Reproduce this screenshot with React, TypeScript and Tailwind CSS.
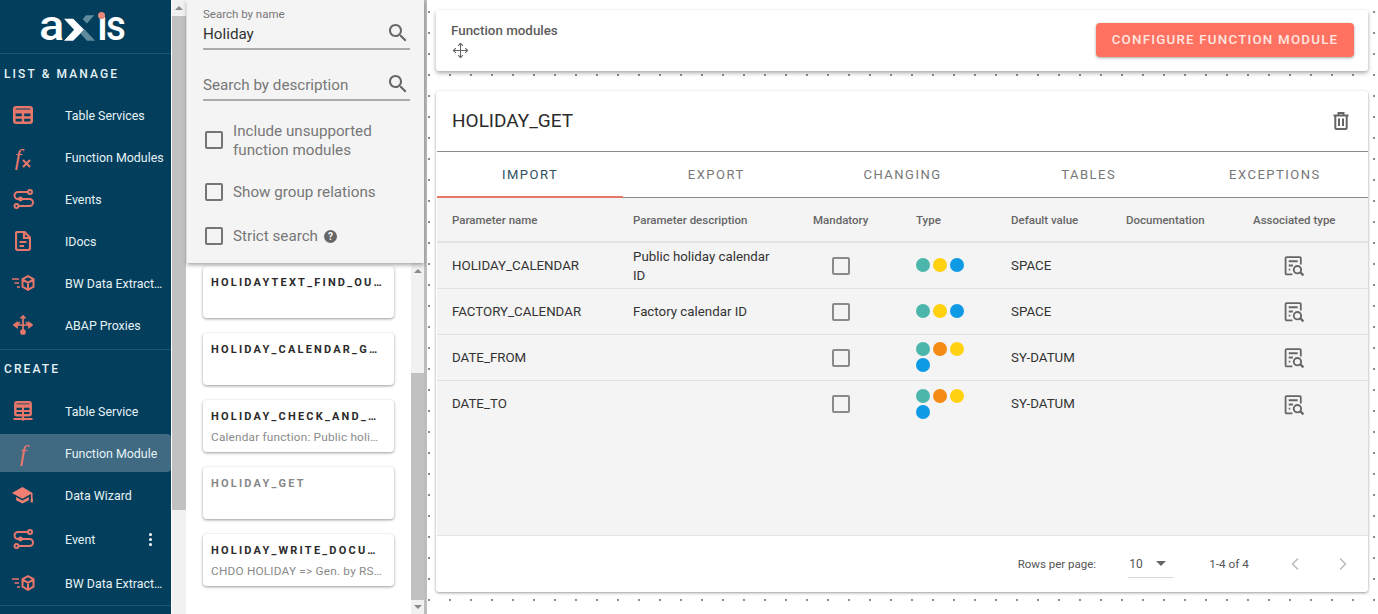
import { ReactNode } from "react";
import { ChevronLeft, ChevronRight, Move } from "lucide-react";

const salmon = "#e8776b";

function SearchIcon({ className }: { className: string }) {
  return (
    <svg width="24" height="24" viewBox="0 0 24 24" fill="#666" className={className}>
      <path d="M15.5 14h-.79l-.28-.27C15.41 12.59 16 11.11 16 9.5 16 5.91 13.09 3 9.5 3S3 5.91 3 9.5 5.91 16 9.5 16c1.61 0 3.09-.59 4.23-1.57l.27.28v.79l5 4.99L20.49 19l-4.99-5zm-6 0C7.01 14 5 11.99 5 9.5S7.01 5 9.5 5 14 7.01 14 9.5 11.99 14 9.5 14z" />
    </svg>
  );
}

function TableIcon() {
  return (
    <svg width="20" height="18" viewBox="0 0 20 18" fill="none">
      <rect x="1.3" y="1.3" width="17.4" height="15.4" rx="2" stroke={salmon} strokeWidth="2.6" />
      <path d="M1 5.500h18" stroke={salmon} strokeWidth="4" />
      <path d="M1 11.500h18M10 6v11" stroke={salmon} strokeWidth="2.4" />
    </svg>
  );
}

function FxIcon() {
  return (
    <span className="flex items-end [font-family:'Liberation_Serif',serif] italic text-[#e8776b] leading-none">
      <span className="text-[24px]">f</span>
      <svg width="9" height="9" viewBox="0 0 9 9" className="mb-[1px] ml-[1px]">
        <path d="M1 1l7 7M8 1L1 8" stroke={salmon} strokeWidth="2" />
      </svg>
    </span>
  );
}

function RouteIcon() {
  return (
    <svg width="21" height="20" viewBox="0 0 21 20" fill="none" stroke={salmon} strokeWidth="2">
      <circle cx="17" cy="3" r="2" />
      <circle cx="3.500" cy="17" r="2" />
      <circle cx="7.500" cy="10" r="1.400" fill={salmon} />
      <path d="M15 3H5a3.500 3.500 0 000 7h11.500a3.500 3.500 0 010 7H6" />
    </svg>
  );
}

function DocIcon() {
  return (
    <svg width="16" height="20" viewBox="0 0 16 20" fill="none" stroke={salmon} strokeWidth="2.200">
      <path d="M2.500 1h7L15 6.500V17a2 2 0 01-2 2H3a2 2 0 01-2-2V2.500A1.500 1.500 0 012.500 1z" />
      <path d="M9 1v6h6M4.500 11h7M4.500 15h4.500" />
    </svg>
  );
}

function CubeIcon() {
  return (
    <svg width="24" height="16" viewBox="0 0 24 16" fill="none" stroke={salmon} strokeWidth="2">
      <path d="M17 1.200l5.500 3v7.400L17 14.800l-5.500-3.200V4.200zM11.500 4.400L17 7.800l5.500-3.400M17 7.800v7" />
      <path d="M1 4h7M3.500 8h4.500M6 12h3" strokeWidth="1.700" />
    </svg>
  );
}

function ProxyIcon() {
  return (
    <svg width="20" height="20" viewBox="0 0 20 20" fill="none" stroke={salmon} strokeWidth="1.700">
      <path d="M10 1v14M4 10h12M4 10l3-3M16 10l-3-3" />
      <path d="M7.500 3.500L10 1l2.500 2.500" />
      <path d="M1 10l3-2.200v4.400zM19 10l-3-2.200v4.400z" fill={salmon} />
      <circle cx="10" cy="17" r="2" fill={salmon} />
    </svg>
  );
}

function TableNetIcon() {
  return (
    <svg width="20" height="20" viewBox="0 0 20 20" fill="none">
      <rect x="2.300" y="1.300" width="15.400" height="13" rx="1.500" stroke={salmon} strokeWidth="2.400" />
      <path d="M2 5h16" stroke={salmon} strokeWidth="3.500" />
      <path d="M2 10h16M10 5v9M10 14v4M0.500 18h19" stroke={salmon} strokeWidth="2" />
      <circle cx="10" cy="18" r="1.800" fill={salmon} />
    </svg>
  );
}

function PlainF() {
  return <span className="[font-family:'Liberation_Serif',serif] italic text-[24px] leading-none text-[#e8776b]">f</span>;
}

function CapIcon() {
  return (
    <svg width="24" height="18" viewBox="0 0 22 17">
      <path d="M10.500 1L0.500 6.500l10 5.500 8-4.400V13h1.500V6.500z" fill="#ef7f72" />
      <path d="M4.500 10.500v3l6 3 6-3v-3l-6 3.300z" fill="#ef7f72" />
      <rect x="18.300" y="12" width="2" height="3.500" fill="#ef7f72" />
    </svg>
  );
}

const listItems: { label: string; icon: ReactNode }[] = [
  { label: "Table Services", icon: <TableIcon /> },
  { label: "Function Modules", icon: <FxIcon /> },
  { label: "Events", icon: <RouteIcon /> },
  { label: "IDocs", icon: <DocIcon /> },
  { label: "BW Data Extractors", icon: <CubeIcon /> },
  { label: "ABAP Proxies", icon: <ProxyIcon /> },
];

function NavRow({ label, icon }: { label: string; icon: ReactNode }) {
  return (
    <div className="h-[42px] flex items-center">
      <div className="w-[46px] flex justify-center shrink-0">{icon}</div>
      <span className="ml-[19px] pt-[2px] w-[100px] truncate text-[12.400px] text-[#e6f2f6]">{label}</span>
    </div>
  );
}

function Logo() {
  return (
    <div className="h-[54px] shrink-0 border-b border-[#1d5570] pl-[39px] flex items-start">
      <div className="flex items-start text-white font-medium text-[42px] leading-[50px] mt-[1px]">
        <span className="inline-block w-[25px] origin-left scale-x-[1.12]">a</span>
        <svg width="33" height="28" viewBox="0 0 36 30" className="mt-[13px] shrink-0">
          <path d="M0 5h10l12 12-12 12H0l11-12z" fill="#ffffff" />
          <path d="M24 1h9l-8 9-4.500-4.500zM18 21l4-5 12 13H25z" fill="#5f8b9c" />
        </svg>
        <span className="relative inline-block w-[9px]">
          <span className="absolute left-[1px] top-[11px] w-[7px] h-[7px] rounded-full bg-[#e8877a]" />
          <span>ı</span>
        </span>
        <span className="inline-block origin-left scale-x-[0.92]">s</span>
      </div>
    </div>
  );
}

function Sidebar() {
  return (
    <aside className="w-[171px] shrink-0 h-full bg-[#033f5c] flex flex-col overflow-hidden">
      <Logo />
      <div className="h-[40px] shrink-0 flex items-center pl-[4px] text-[12px] font-medium tracking-[2.100px] text-[#e6f2f6]">LIST &amp; MANAGE</div>
      <div className="border-b border-[#1d5570] pb-[3px]">
        {listItems.map((item) => (
          <NavRow key={item.label} label={item.label} icon={item.icon} />
        ))}
      </div>
      <div className="h-[40px] shrink-0 flex items-center pl-[4px] pb-[2px] text-[12px] font-medium tracking-[2.100px] text-[#e6f2f6]">CREATE</div>
      <NavRow label="Table Service" icon={<TableNetIcon />} />
      <div className="h-[42px] py-[2px]">
        <div className="h-[38px] flex items-center bg-[#3f6a82] rounded-r-[4px]">
          <div className="w-[46px] flex justify-center shrink-0"><PlainF /></div>
          <span className="ml-[19px] pt-[2px] text-[12.400px] text-[#e6f2f6]">Function Module</span>
        </div>
      </div>
      <NavRow label="Data Wizard" icon={<CapIcon />} />
      <div className="h-[46px] flex items-center">
        <div className="w-[46px] flex justify-center shrink-0"><RouteIcon /></div>
        <span className="ml-[19px] pt-[2px] text-[12.400px] text-[#e6f2f6]">Event</span>
        <div className="ml-auto mr-[19px] flex flex-col gap-[2px]">
          <span className="w-[3px] h-[3px] rounded-full bg-white" />
          <span className="w-[3px] h-[3px] rounded-full bg-white" />
          <span className="w-[3px] h-[3px] rounded-full bg-white" />
        </div>
      </div>
      <NavRow label="BW Data Extractors" icon={<CubeIcon />} />
      <div className="border-t border-[#1d5570] mt-[1px]" />
    </aside>
  );
}

function Scrollbar({ before, thumb, endArrow }: { before: number; thumb: number; endArrow?: boolean }) {
  return (
    <div className="h-full flex flex-col items-stretch bg-[#f1f1f1]">
      <div className="h-[16px] shrink-0 flex items-center justify-center">
        <span className="w-0 h-0 border-x-[4px] border-x-transparent border-b-[4px] border-b-[#8a8a8a]" />
      </div>
      <div className="shrink-0" style={{ height: before }} />
      <div className="shrink-0 bg-[#c1c1c1]" style={{ height: thumb }} />
      <div className="flex-1" />
      {endArrow && (
        <div className="h-[14px] shrink-0 flex items-center justify-center">
          <span className="w-0 h-0 border-x-[4px] border-x-transparent border-t-[4px] border-t-[#8a8a8a]" />
        </div>
      )}
    </div>
  );
}

function Box({ light }: { light?: boolean }) {
  return <span className={`block w-[18px] h-[18px] shrink-0 rounded-[2px] border-2 ${light ? "border-[#8a8a8a]" : "border-[#757575]"}`} />;
}

function HelpDot() {
  return (
    <span className="w-[13px] h-[13px] rounded-full bg-[#666] text-white text-[10px] font-bold leading-[13px] text-center inline-block">?</span>
  );
}

function FilterPanel() {
  return (
    <div className="relative z-10 h-[263px] shrink-0 bg-[#f4f4f4] shadow-[0_2px_4px_rgba(0,0,0,0.35)] pl-[16px] pr-[14px]">
      <div className="h-[50px] border-b-2 border-[#ababab] pt-[7px] relative">
        <div className="text-[11.500px] leading-[14px] text-[#777]">Search by name</div>
        <div className="text-[15.200px] leading-[24px] mt-[1px] text-[#333]">Holiday</div>
        <SearchIcon className="absolute right-[0px] top-[21px]" />
      </div>
      <div className="h-[51px] border-b-2 border-[#ababab] relative flex items-end pb-[2px]">
        <span className="text-[15.200px] leading-[24px] text-[#777]">Search by description</span>
        <SearchIcon className="absolute right-[0px] top-[22px]" />
      </div>
      <div className="flex items-center h-[38px] mt-[20px] pl-[2px] gap-[10px]">
        <Box />
        <span className="text-[15.200px] leading-[19px] pt-[1px] text-[#777]">Include unsupported<br />function modules</span>
      </div>
      <div className="flex items-center h-[24px] mt-[21px] pl-[2px] gap-[10px]">
        <Box />
        <span className="text-[15.200px] text-[#777]">Show group relations</span>
      </div>
      <div className="flex items-center h-[24px] mt-[20px] pl-[2px] gap-[10px]">
        <Box />
        <span className="text-[15.200px] text-[#777]">Strict search</span>
        <span className="-ml-[4px] flex"><HelpDot /></span>
      </div>
    </div>
  );
}

const modules = [
  { name: "HOLIDAYTEXT_FIND_OUT_LONG", desc: "" },
  { name: "HOLIDAY_CALENDAR_GET", desc: "" },
  { name: "HOLIDAY_CHECK_AND_GET_INFO", desc: "Calendar function: Public holiday check" },
  { name: "HOLIDAY_GET", desc: "", active: true },
  { name: "HOLIDAY_WRITE_DOCUMENT", desc: "CHDO HOLIDAY => Gen. by RSSCD000" },
];

function ModuleList() {
  return (
    <div className="flex-1 min-h-0 bg-white flex">
      <div className="w-[224px] pl-[16px] pr-[17px] pt-[3px] flex flex-col gap-[15px]">
        {modules.map((m) => (
          <div key={m.name} className="h-[52px] shrink-0 bg-white rounded-[4px] shadow-[0_1px_3px_rgba(0,0,0,0.4)] pl-[8px] pr-[12px] pt-[10px]">
            <div className={`truncate text-[11px] leading-[14px] font-bold tracking-[2.200px] ${m.active ? "text-[#888]" : "text-[#2b2b2b]"}`}>{m.name}</div>
            <div className="truncate text-[11.800px] leading-[14px] mt-[6px] tracking-[0.200px] text-[#8a8a8a]">{m.desc}</div>
          </div>
        ))}
      </div>
      <div className="w-[13px] shrink-0 h-full">
        <Scrollbar before={94} thumb={227} endArrow />
      </div>
    </div>
  );
}

const teal = "bg-[#4db6ac]";
const yellow = "bg-[#ffd10f]";
const blue = "bg-[#0f9ae6]";
const orange = "bg-[#f58b14]";

const params = [
  { name: "HOLIDAY_CALENDAR", desc: "Public holiday calendar ID", dots: [teal, yellow, blue], def: "SPACE" },
  { name: "FACTORY_CALENDAR", desc: "Factory calendar ID", dots: [teal, yellow, blue], def: "SPACE" },
  { name: "DATE_FROM", desc: "", dots: [teal, orange, yellow, blue], def: "SY-DATUM" },
  { name: "DATE_TO", desc: "", dots: [teal, orange, yellow, blue], def: "SY-DATUM" },
];

const columns = "grid grid-cols-[181px_180px_103px_95px_115px_127px_1fr] items-center pl-[15px]";

function AssocIcon() {
  return (
    <svg width="21" height="21" viewBox="0 0 20 20" fill="none" stroke="#666" strokeWidth="1.700">
      <path d="M8 17.500H2.500a1 1 0 01-1-1V2a1 1 0 011-1h12.500a1 1 0 011 1v6" />
      <path d="M4.500 5h8.500M4.500 9h4M4.500 13h1.500" strokeWidth="1.800" />
      <circle cx="12.800" cy="13" r="3.500" strokeWidth="1.800" />
      <path d="M15.500 15.500l3 3" strokeWidth="2.200" />
    </svg>
  );
}

function TrashIcon() {
  return (
    <svg width="16" height="18" viewBox="0 0 16 18" fill="none" stroke="#666" strokeWidth="2">
      <path d="M0.500 3.500h15M5.500 3V1h5v2M2.300 3.500V16a1 1 0 001 1h9.400a1 1 0 001-1V3.500M6 6.500v7.500M10 6.500v7.500" />
    </svg>
  );
}

function ParamTable() {
  return (
    <div className="flex-1 min-h-0 bg-[#f4f4f4] border-b border-[#e4e4e4]">
      <div className={`${columns} h-[45px] pt-[2px] border-b-2 border-[#e2e2e2] text-[11.500px] font-medium text-[#666]`}>
        <span>Parameter name</span>
        <span>Parameter description</span>
        <span>Mandatory</span>
        <span>Type</span>
        <span>Default value</span>
        <span>Documentation</span>
        <span>Associated type</span>
      </div>
      {params.map((p) => (
        <div key={p.name} className={`${columns} h-[46px] border-b border-[#e2e2e2] last:border-b-0 text-[13.300px] text-[#333]`}>
          <span>{p.name}</span>
          <span className="w-[145px] leading-[19px]">{p.desc}</span>
          <span className="pl-[19px]"><Box light /></span>
          <div className="flex flex-wrap w-[51px] gap-x-[3px] gap-y-[2px] -mt-[1px]">
            {p.dots.map((d, i) => (
              <span key={i} className={`w-[14px] h-[14px] rounded-full ${d}`} />
            ))}
          </div>
          <span>{p.def}</span>
          <span />
          <span className="pl-[31px] pt-[2px]"><AssocIcon /></span>
        </div>
      ))}
    </div>
  );
}

const tabs = ["IMPORT", "EXPORT", "CHANGING", "TABLES", "EXCEPTIONS"];

export default function App() {
  return (
    <div className="w-[1378px] h-[614px] flex overflow-hidden bg-white [font-family:Roboto,sans-serif]">
      <Sidebar />
      <div className="w-[16px] shrink-0 h-full pl-[1px]">
        <div className="w-[14px] h-full"><Scrollbar before={0} thumb={494} /></div>
      </div>
      <div className="w-[240px] shrink-0 h-full flex flex-col border-r-[3px] border-[#bdbdbd]">
        <FilterPanel />
        <ModuleList />
      </div>
      <main className="flex-1 min-w-0 h-full px-[9px] pt-[10px] bg-[radial-gradient(circle_at_1px_1px,#888_0.7px,transparent_1px)] [background-size:21px_21px] [background-position:1px_11px]">
        <div className="w-[932px] h-[61px] bg-white rounded-[3px] shadow-[0_2px_4px_rgba(0,0,0,0.35)] flex items-start justify-between pl-[15px] pr-[14px]">
          <div className="pt-[14px]">
            <div className="text-[13.350px] leading-[14px] font-medium text-[#5c5c5c]">Function modules</div>
            <Move className="mt-[4px] ml-[1px] text-[#666]" size={17} strokeWidth={1.500} />
          </div>
          <button className="mt-[13px] w-[258px] h-[34px] rounded-[4px] bg-[#ff7261] shadow-[0_1px_3px_rgba(0,0,0,0.35)] text-[13.350px] font-medium tracking-[1.200px] text-[#ffe6e0]">
            CONFIGURE FUNCTION MODULE
          </button>
        </div>
        <div className="w-[932px] h-[501px] mt-[20px] bg-white rounded-[3px] shadow-[0_1px_3px_rgba(0,0,0,0.4)] flex flex-col">
          <div className="h-[61px] shrink-0 ml-[1px] border-b border-[#8c8c8c] flex items-center justify-between pl-[15px] pr-[19px]">
            <span className="text-[19px] text-[#2b2b2b]">HOLIDAY_GET</span>
            <TrashIcon />
          </div>
          <div className="h-[46px] shrink-0 ml-[1px] grid grid-cols-5 border-b border-[#8c8c8c]">
            {tabs.map((t, i) => (
              <div key={t} className={`flex items-center justify-center pt-[1px] text-[13px] tracking-[1.500px] ${i === 0 ? "text-[#2f5060] border-b-2 border-[#e8776b] -mb-[1px] pt-[2px]" : "text-[#777]"}`}>
                {t}
              </div>
            ))}
          </div>
          <div className="flex-1 min-h-0 ml-[1px] flex flex-col"><ParamTable /></div>
          <div className="h-[56px] shrink-0 flex items-center justify-end text-[#555]">
            <span className="text-[11.500px] pt-[1px]">Rows per page:</span>
            <div className="ml-[32px] w-[46px] h-[28px] border-b border-[#d8d8d8] flex items-center justify-between pl-[1px] pr-[8px] text-[12px]">
              <span>10</span>
              <span className="w-0 h-0 border-x-[5px] border-x-transparent border-t-[5px] border-t-[#666]" />
            </div>
            <span className="ml-[35px] text-[11.800px] pt-[1px]">1-4 of 4</span>
            <ChevronLeft className="ml-[36px] text-[#bdbdbd]" size={20} />
            <ChevronRight className="ml-[28px] mr-[15px] text-[#bdbdbd]" size={20} />
          </div>
        </div>
      </main>
    </div>
  );
}
